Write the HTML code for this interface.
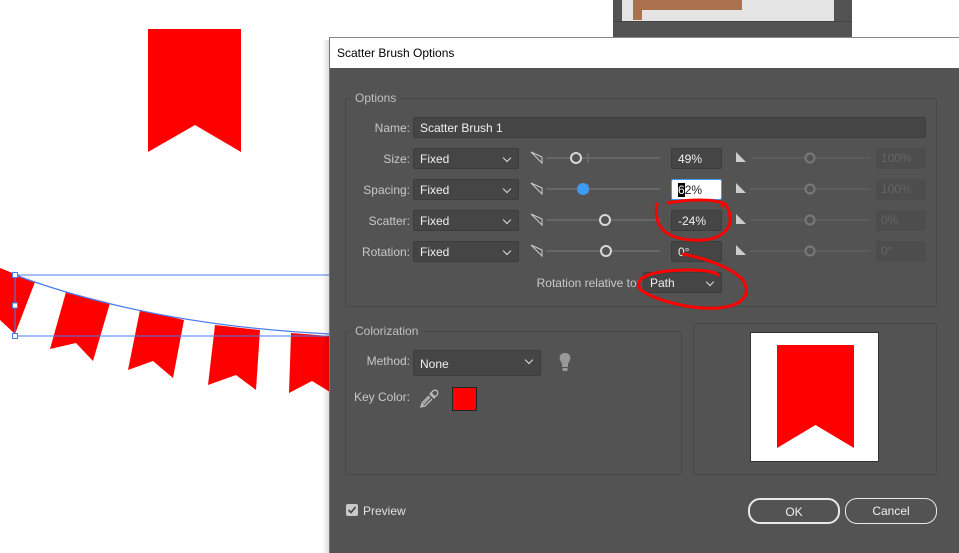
<!DOCTYPE html>
<html><head><meta charset="utf-8"><style>
*{margin:0;padding:0;box-sizing:border-box}
body{width:959px;height:553px;overflow:hidden;background:#fff;position:relative;font-family:"Liberation Sans",sans-serif;font-size:12px}
.a{position:absolute}
.lbl{position:absolute;color:#c8c8c8;text-align:right;font-size:12px}
.dd{position:absolute;background:#454545;border:1px solid #3c3c3c;border-radius:2px;color:#f0f0f0;font-size:12px;padding:3px 0 0 6px}
.dd:after{content:"";position:absolute;right:8px;top:6px;width:5px;height:5px;border-right:1.5px solid #ddd;border-bottom:1.5px solid #ddd;transform:rotate(45deg)}
.box{position:absolute;background:#454545;border:1px solid #3c3c3c;border-radius:2px;color:#f0f0f0;padding:3px 0 0 6px;font-size:12px}
.dis{position:absolute;background:#4d4d4d;border-radius:2px;color:#656565;padding:3px 0 0 5px;font-size:12px}
.grp{position:absolute;border:1px solid #474747;border-radius:3px}
.btn{position:absolute;border:2px solid #e8e8e8;border-radius:12px;color:#f0f0f0;text-align:center;font-size:12px;padding-top:5px}
</style></head><body>
<!-- background panel -->
<div class="a" style="left:613px;top:0;width:239px;height:40px;background:#535353"></div>
<div class="a" style="left:622px;top:0;width:212px;height:21px;background:#e4e4e4"></div>
<div class="a" style="left:633px;top:0;width:109px;height:10px;background:#a9714e"></div>
<div class="a" style="left:633px;top:0;width:9px;height:20px;background:#a9714e"></div>
<div class="a" style="left:613px;top:21px;width:239px;height:1px;background:#444"></div>
<!-- left canvas -->
<svg class="a" style="left:0;top:0" width="340" height="553">
<polygon points="148,29 241,29 241,152 195,125 148,152" fill="#f00"/>
<polygon points="0,268 35,282 15,334 0,320" fill="#f00"/>
<polygon points="66,292 110,303 93,361 76,343 50,349" fill="#f00"/>
<polygon points="140,310 184,320 173,378 153,361 128,370" fill="#f00"/>
<polygon points="215,325 260,330 256,390 236,375 208,385" fill="#f00"/>
<polygon points="291,333 330,336 330,392 312,381 289,393" fill="#f00"/>
<line x1="15" y1="275" x2="330" y2="275" stroke="#4a7cf0" stroke-width="1"/>
<line x1="15" y1="336" x2="330" y2="336" stroke="#4a7cf0" stroke-width="1"/>
<line x1="15" y1="275" x2="15" y2="336" stroke="#4a7cf0" stroke-width="1"/>
<path d="M15,275 Q150,325 330,334" fill="none" stroke="#4a7cf0" stroke-width="1.2"/>
<rect x="12.5" y="272.5" width="5" height="5" fill="#fff" stroke="#4a7cf0"/>
<rect x="12.5" y="303" width="5" height="5" fill="#fff" stroke="#4a7cf0"/>
<rect x="12.5" y="333.5" width="5" height="5" fill="#fff" stroke="#4a7cf0"/>
</svg>
<div class="a" style="left:322px;top:40px;width:8px;height:513px;background:linear-gradient(to right,rgba(0,0,0,0),rgba(0,0,0,.15))"></div>
<!-- dialog -->
<div class="a" style="left:329px;top:37px;width:630px;height:516px;background:#535353;border-left:1px solid #777;border-top:1px solid #888"></div>
<div class="a" style="left:330px;top:38px;width:629px;height:30px;background:#fff;color:#000;font-size:12px;padding:8px 0 0 7px">Scatter Brush Options</div>
<div class="grp" style="left:345px;top:98px;width:592px;height:209px"></div>
<div class="a" style="left:351px;top:91px;background:#535353;color:#c0c0c0;padding:0 4px">Options</div>
<div class="lbl" style="left:340px;top:121px;width:70px">Name:</div>
<div class="box" style="left:413px;top:117px;width:513px;height:21px">Scatter Brush 1</div>

<div class="lbl" style="left:340px;top:152px;width:70px">Size:</div>
<div class="lbl" style="left:340px;top:183px;width:70px">Spacing:</div>
<div class="lbl" style="left:340px;top:214px;width:70px">Scatter:</div>
<div class="lbl" style="left:340px;top:245px;width:70px">Rotation:</div>
<div class="dd" style="left:413px;top:148px;width:106px;height:21px">Fixed</div>
<div class="dd" style="left:413px;top:179px;width:106px;height:21px">Fixed</div>
<div class="dd" style="left:413px;top:210px;width:106px;height:21px">Fixed</div>
<div class="dd" style="left:413px;top:241px;width:106px;height:21px">Fixed</div>
<svg class="a" style="left:525px;top:140px" width="410" height="125">
<g stroke="#6e6e6e" stroke-width="1.5">
<line x1="21" y1="18" x2="135" y2="18"/><line x1="21" y1="49" x2="135" y2="49"/>
<line x1="21" y1="80" x2="135" y2="80"/><line x1="21" y1="111" x2="135" y2="111"/>
<line x1="63" y1="13" x2="63" y2="23"/><line x1="63" y1="44" x2="63" y2="54"/>
</g>
<g stroke="#606060" stroke-width="1.5">
<line x1="225" y1="18" x2="345" y2="18"/><line x1="225" y1="49" x2="345" y2="49"/>
<line x1="225" y1="80" x2="345" y2="80"/><line x1="225" y1="111" x2="345" y2="111"/>
</g>
<g fill="#535353" stroke="#d8d8d8" stroke-width="2">
<circle cx="51" cy="18" r="5"/><circle cx="80" cy="80" r="5"/><circle cx="81" cy="111" r="5"/>
</g>
<circle cx="58" cy="49" r="6" fill="#3f9bf5"/>
<g fill="#797979" stroke="none">
<circle cx="285" cy="18" r="5.5"/><circle cx="285" cy="49" r="5.5"/><circle cx="285" cy="80" r="5.5"/><circle cx="285" cy="111" r="5.5"/>
</g>
<g fill="#535353"><circle cx="285" cy="18" r="3.5"/><circle cx="285" cy="49" r="3.5"/><circle cx="285" cy="80" r="3.5"/><circle cx="285" cy="111" r="3.5"/></g>
<g fill="none" stroke="#ccc" stroke-width="1">
<path d="M6,12 L17,23 L17,17 Z M6,43 L17,54 L17,48 Z M6,74 L17,85 L17,79 Z M6,105 L17,116 L17,110 Z"/>
</g>
<g fill="#ccc"><path d="M211,12 L221,22 L211,22 Z M211,43 L221,53 L211,53 Z M211,74 L221,84 L211,84 Z M211,105 L221,115 L211,115 Z"/></g>
</svg>
<div class="box" style="left:671px;top:148px;width:51px;height:21px">49%</div>
<div class="box" style="left:671px;top:179px;width:51px;height:21px;background:#fff;border:1px solid #3f9bf5;color:#222"><span style="background:#000;color:#fff">6</span>2%</div>
<div class="box" style="left:671px;top:210px;width:51px;height:21px">-24%</div>
<div class="box" style="left:671px;top:241px;width:51px;height:21px">0°</div>
<div class="dis" style="left:876px;top:148px;width:50px;height:21px">100%</div>
<div class="dis" style="left:876px;top:179px;width:50px;height:21px">100%</div>
<div class="dis" style="left:876px;top:210px;width:50px;height:21px">0%</div>
<div class="dis" style="left:876px;top:241px;width:50px;height:21px">0°</div>
<div class="lbl" style="left:520px;top:276px;width:120px">Rotation relative to:</div>
<div class="dd" style="left:643px;top:272px;width:79px;height:21px">Path</div>

<div class="grp" style="left:345px;top:331px;width:337px;height:144px"></div>
<div class="a" style="left:351px;top:324px;background:#535353;color:#c0c0c0;padding:0 4px">Colorization</div>
<div class="lbl" style="left:340px;top:354px;width:70px">Method:</div>
<div class="dd" style="left:413px;top:350px;width:128px;height:26px;padding-top:6px">None</div>
<svg class="a" style="left:557px;top:352px" width="16" height="22"><path d="M8,1 C3,1 2,5 3,8 L5,12 L5,15 L11,15 L11,12 L13,8 C14,5 13,1 8,1Z" fill="#999"/><rect x="5.5" y="16" width="5" height="3" fill="#999"/></svg>
<div class="lbl" style="left:340px;top:390px;width:70px">Key Color:</div>
<svg class="a" style="left:418px;top:388px" width="22" height="22"><path d="M3,19 L12,9 M13,5 L17,9 M15,3 a2.5,2.5 0 0 1 4,4 L16,10 L12,6 Z M11,8 L4,15 L3,19 L7,18 L14,11" fill="none" stroke="#bbb" stroke-width="1.3"/></svg>
<div class="a" style="left:452px;top:387px;width:25px;height:24px;background:#f00;border:1px solid #222"></div>

<div class="grp" style="left:693px;top:323px;width:244px;height:152px"></div>
<div class="a" style="left:750px;top:332px;width:129px;height:130px;background:#fff;border:1px solid #333"></div>
<svg class="a" style="left:777px;top:345px" width="77" height="104"><polygon points="0,0 77,0 77,103 38.5,80 0,103" fill="#f00"/></svg>

<div class="a" style="left:346px;top:504px;width:12px;height:12px;background:#c8c8c8;border-radius:2px"></div>
<svg class="a" style="left:346px;top:504px" width="12" height="12"><path d="M2.5,6 L5,8.5 L9.5,3" fill="none" stroke="#444" stroke-width="1.6"/></svg>
<div class="a" style="left:363px;top:504px;color:#e0e0e0">Preview</div>
<div class="btn" style="left:748px;top:498px;width:92px;height:26px">OK</div>
<div class="btn" style="left:845px;top:498px;width:92px;height:26px;border-width:1.5px">Cancel</div>

<!-- annotations -->
<svg class="a" style="left:0;top:0" width="959" height="553">
<g fill="none" stroke="#f00" stroke-width="3" stroke-linecap="round">
<path d="M657,204 C654,222 660,238 692,240 C722,242 734,228 729,212 C727,205 724,201 722,206 M723,203 C712,199 688,199 668,203"/>
<path d="M621,252 M683,254 C703,258 730,266 743,280 C752,295 742,306 718,308 C690,310 655,300 641,290 C633,280 645,270 690,270 C705,270 715,272 718,275"/>
</g>
</svg>
</body></html>
